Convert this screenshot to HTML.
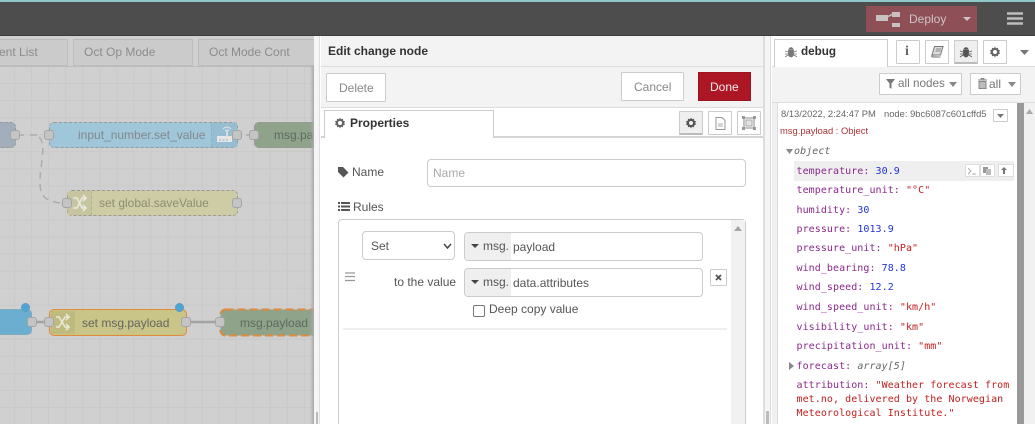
<!DOCTYPE html>
<html><head><meta charset="utf-8"><style>
html,body{margin:0;padding:0;background:#fff}
#r{position:relative;width:1035px;height:424px;overflow:hidden;font-family:"Liberation Sans",sans-serif;font-size:12px;color:#555;background:#fff}
#r div,#r span.a,#r svg{position:absolute;box-sizing:border-box}
.t{white-space:nowrap;line-height:16px}
.btn{background:#fff;border:1px solid #ccc;border-radius:1px}
.node{border-radius:5px;border:1px dashed #999}
.port{width:10px;height:10px;background:#c4c4c4;border:1px solid #a5a5a5;border-radius:3px}
.m{font-family:"DejaVu Sans Mono",monospace;font-size:10px;white-space:nowrap;line-height:14px;left:796.5px;color:#8a2a8a;letter-spacing:.06px}
.n{color:#2233dd}.s{color:#c02020}
.inp{background:#fff;border:1px solid #ccc;border-radius:4px}
.msg{background:#efefef;border-right:0;left:0;top:0;bottom:0;width:46px;border-radius:3px 0 0 3px}
</style></head><body><div id="r">
<!-- canvas -->
<div style="left:0;top:35px;width:314px;height:389px;background:#d0d0d0"></div>
<svg style="left:0;top:66px" width="314" height="358"><defs><pattern id="g" x="-3" y="0" width="17.05" height="17.05" patternUnits="userSpaceOnUse"><path d="M.5 0V17.05M0 .5H17.05" stroke="#c9c9c9" fill="none"/></pattern></defs><rect width="314" height="358" fill="url(#g)"/></svg>
<!-- canvas tabs -->
<div style="left:-60px;top:39px;width:128px;height:27px;background:#cbcbcb;border:1px solid #bcbcbc"></div>
<div class="t" style="left:-1px;top:44px;font-size:12px;color:#8c8c8c">ent List</div>
<div style="left:73px;top:39px;width:120px;height:27px;background:#cbcbcb;border:1px solid #bcbcbc"></div>
<div class="t" style="left:84px;top:44px;color:#8c8c8c">Oct Op Mode</div>
<div style="left:198px;top:39px;width:116px;height:27px;background:#cbcbcb;border:1px solid #bcbcbc;border-right:0"></div>
<div class="t" style="left:209px;top:44px;color:#8c8c8c">Oct Mode Cont</div>
<div style="left:0;top:66px;width:314px;height:1px;background:#bdbdbd"></div>
<!-- wires -->
<svg style="left:0;top:0" width="314" height="424"><path d="M20 135H24M30 135H39M39 137C44 142 43 150 42 160C38 190 38 200 60 203" stroke="#adadad" stroke-width="1.500" stroke-dasharray="7 5" fill="none"/><path d="M237 135H254" stroke="#adadad" stroke-width="1.500" stroke-dasharray="5 4" fill="none"/><path d="M32 322H49M186 322H220" stroke="#a3a3a3" stroke-width="2.500" fill="none"/></svg>
<!-- nodes -->
<div class="node" style="left:-10px;top:122px;width:26px;height:26px;background:#a3aebc"></div>
<div class="port" style="left:10px;top:130px"></div>
<div class="node" style="left:49px;top:122px;width:189px;height:26px;background:#9fc6d9"></div>
<div style="left:211px;top:123px;width:26px;height:24px;background:#96bdd1;border-left:1px dashed #8fb0c2"></div>
<svg style="left:216px;top:126px" width="18" height="18"><path d="M1 10H16V16H1Z" fill="#e6e6e6"/><path d="M11 10V5" stroke="#e6e6e6" stroke-width="1.500"/><path d="M7 3Q11 -1 15 3M9 5Q11 3 13 5" stroke="#e6e6e6" fill="none"/><path d="M3 14H5M6.500 14H8.500M10 14H12" stroke="#8fb0c2"/></svg>
<div class="t" style="left:78px;top:127px;color:#84888e;font-size:12px">input_number.set_value</div>
<div class="port" style="left:44px;top:130px"></div>
<div class="port" style="left:232px;top:130px"></div>
<div class="node" style="left:254px;top:122px;width:70px;height:26px;background:#8ea38a"></div>
<div class="port" style="left:249px;top:130px"></div>
<div class="t" style="left:274px;top:127px;color:#5f6a5e">msg.pa</div>
<div class="node" style="left:67px;top:190px;width:171px;height:26px;background:#cdcca5"></div>
<div style="left:68px;top:191px;width:24px;height:24px;background:#c6c59f;border-right:1px dashed #b3b28e"></div>
<svg style="left:71px;top:194px" width="17" height="18"><path d="M2 4H6L11 14H14M2 14H6L11 4H14M12 1L15 4L12 7M12 11L15 14L12 17" stroke="#e9e9e0" stroke-width="1.600" fill="none"/></svg>
<div class="t" style="left:99px;top:195px;color:#8e8e72">set global.saveValue</div>
<div class="port" style="left:62px;top:198px"></div>
<div class="port" style="left:232px;top:198px"></div>
<div style="left:-10px;top:309px;width:42px;height:26px;background:#6baed0;border:1px solid #7fa9be;border-radius:5px"></div>
<div class="port" style="left:27px;top:317px"></div>
<div style="left:21px;top:303px;width:9px;height:9px;border-radius:50%;background:#4ea5d5;border:1px solid #5a9dc0"></div>
<div style="left:49px;top:309px;width:138px;height:27px;background:#c9c487;border:1.500px solid #e08a3c;border-radius:5px"></div>
<div style="left:51px;top:311px;width:24px;height:23px;background:#bfbb80"></div>
<svg style="left:54px;top:312px" width="17" height="20"><path d="M2 5H5L11 15H14M2 15H5L11 5H14M12 2L15 5L12 8M12 12L15 15L12 18" stroke="#e9e9d8" stroke-width="1.600" fill="none"/></svg>
<div class="t" style="left:82px;top:315px;color:#666660;letter-spacing:0">set msg.payload</div>
<div class="port" style="left:44px;top:317px"></div>
<div class="port" style="left:181px;top:317px"></div>
<div style="left:175px;top:303px;width:9px;height:9px;border-radius:50%;background:#4ea5d5;border:1px solid #5a9dc0"></div>
<svg style="left:219px;top:308px" width="95" height="29"><rect x="1.500" y="1.500" width="120" height="26" rx="5" fill="#8ea38a" stroke="#e08a3c" stroke-width="2" stroke-dasharray="8 4"/></svg>
<div class="port" style="left:215px;top:317px"></div>
<div class="t" style="left:240px;top:315px;color:#5f6a5e">msg.payload</div>
<!-- top bar -->
<div style="left:0;top:0;width:1035px;height:36px;background:#4d4d4d;border-bottom:1px solid #3d3d3d"></div>
<div style="left:0;top:0;width:1035px;height:2px;background:#8fc8c8"></div>
<div style="left:866px;top:6px;width:111px;height:26px;background:#8e4f57"></div>
<svg style="left:875px;top:11px" width="26" height="17"><path d="M1 4H13V10H1ZM17 1H25V6H17ZM17 12H25V16H17Z" fill="#c9c0c0"/><path d="M12 6L18 3" stroke="#c9c0c0" stroke-width="1.500"/></svg>
<div class="t" style="left:909px;top:11px;color:#cfc4c6;font-size:12px">Deploy</div>
<svg style="left:962px;top:16px" width="9" height="6"><path d="M1 1H9L5 5Z" fill="#cfc4c6"/></svg>
<svg style="left:1007px;top:12px" width="16" height="14"><path d="M0 1.500H16M0 6.500H16M0 11.500H16" stroke="#bdbdbd" stroke-width="2.400"/></svg>
<!-- left gutter -->
<div style="left:310px;top:66px;width:4px;height:358px;background:linear-gradient(90deg,rgba(170,170,170,0),#a9a9a9)"></div>
<div style="left:314px;top:36px;width:6px;height:388px;background:#f5f5f5;border-right:1px solid #ddd"></div>
<div style="left:316px;top:412px;width:2px;height:12px;background:#bbb"></div>
<!-- edit tray -->
<div style="left:320px;top:36px;width:443px;height:388px;background:#fff"></div>
<div style="left:321px;top:36px;width:442px;height:31px;background:#f3f3f3;border-bottom:1px solid #ddd"></div>
<div class="t" style="left:328px;top:43px;color:#333;font-weight:bold;font-size:12px">Edit change node</div>
<div style="left:321px;top:67px;width:442px;height:41px;background:#f3f3f3;border-bottom:1px solid #ddd"></div>
<div class="btn" style="left:326px;top:73px;width:60px;height:29px"></div>
<div class="t" style="left:339px;top:80px;color:#888">Delete</div>
<div class="btn" style="left:621px;top:72px;width:63px;height:29px"></div>
<div class="t" style="left:634px;top:79px;color:#888">Cancel</div>
<div style="left:698px;top:72px;width:53px;height:29px;background:#ad1625;border:1px solid #9a1421"></div>
<div class="t" style="left:710px;top:79px;color:#eee">Done</div>
<div style="left:321px;top:136px;width:442px;height:2px;background:#d4d4d4"></div>
<div style="left:324px;top:110px;width:170px;height:28px;background:#fff;border:1px solid #ccc;border-bottom:0"></div>
<svg style="left:334px;top:117px" width="12" height="12" viewBox="0 0 24 24"><path d="M12 1l2 3.500 4-1 .5 4 4 1.500-2.500 3 2.500 3-4 1.500-.5 4-4-1-2 3.500-2-3.500-4 1-.5-4-4-1.500 2.500-3-2.500-3 4-1.500.5-4 4 1zM12 8a4 4 0 100 8 4 4 0 000-8z" fill="#666" fill-rule="evenodd"/></svg>
<div class="t" style="left:350px;top:115px;color:#333;font-weight:bold;font-size:12px">Properties</div>
<div class="btn" style="left:679px;top:111px;width:24px;height:24px;background:#efefef;border-bottom:2px solid #bbb"></div>
<svg style="left:685px;top:117px" width="12" height="12" viewBox="0 0 24 24"><path d="M12 1l2 3.500 4-1 .5 4 4 1.500-2.500 3 2.500 3-4 1.500-.5 4-4-1-2 3.500-2-3.500-4 1-.5-4-4-1.500 2.500-3-2.500-3 4-1.500.5-4 4 1zM12 8a4 4 0 100 8 4 4 0 000-8z" fill="#555" fill-rule="evenodd"/></svg>
<div class="btn" style="left:708px;top:111px;width:24px;height:24px"></div>
<svg style="left:715px;top:117px" width="11" height="13"><path d="M1 .5H7L10 3.500V12.500H1Z" fill="#fff" stroke="#999"/><path d="M3 7H8M3 9H8" stroke="#aaa"/></svg>
<div class="btn" style="left:737px;top:111px;width:24px;height:24px"></div>
<svg style="left:742px;top:116px" width="14" height="14"><path d="M2 2H12V12H2Z" fill="none" stroke="#888"/><path d="M4 4H10V10H4Z" fill="#e4e4e4" stroke="#aaa"/><path d="M0 0H3V3H0ZM11 0H14V3H11ZM0 11H3V14H0ZM11 11H14V14H11Z" fill="#999"/></svg>
<!-- form -->
<svg style="left:338px;top:167px" width="11" height="11"><path d="M0 0H5L10.500 5.500 5.500 10.500 0 5Z" fill="#555"/></svg>
<div class="t" style="left:352px;top:164px;color:#555">Name</div>
<div class="inp" style="left:427px;top:159px;width:319px;height:28px"></div>
<div class="t" style="left:433px;top:165px;color:#aaa">Name</div>
<svg style="left:338px;top:201px" width="12" height="10"><path d="M0 1H2V3H0ZM0 4.500H2V6.500H0ZM0 8H2V10H0ZM3 1H12V3H3ZM3 4.500H12V6.500H3ZM3 8H12V10H3Z" fill="#555"/></svg>
<div class="t" style="left:353px;top:199px;color:#555">Rules</div>
<div style="left:338px;top:219px;width:408px;height:220px;border:1px solid #ccc;border-radius:4px;background:#fff"></div>
<div style="left:731px;top:220px;width:14px;height:204px;background:#f1f1f1"></div>
<svg style="left:734px;top:226px" width="8" height="5"><path d="M0 5L4 0 8 5Z" fill="#a3a3a3"/></svg>
<div class="inp" style="left:362px;top:231px;width:93px;height:29px"></div>
<div class="t" style="left:371px;top:238px;color:#555">Set</div>
<svg style="left:443px;top:243px" width="9" height="6"><path d="M1 1L4.500 5 8 1" stroke="#444" stroke-width="1.500" fill="none"/></svg>
<div class="inp" style="left:464px;top:232px;width:239px;height:29px"><div class="msg"></div></div>
<svg style="left:471px;top:244px" width="8" height="5"><path d="M0 0H8L4 4Z" fill="#444"/></svg>
<div class="t" style="left:483px;top:238px;color:#555">msg.</div>
<div class="t" style="left:513px;top:239px;color:#555">payload</div>
<div class="t" style="left:394px;top:274px;color:#555">to the value</div>
<div class="inp" style="left:464px;top:268px;width:239px;height:29px"><div class="msg"></div></div>
<svg style="left:471px;top:280px" width="8" height="5"><path d="M0 0H8L4 4Z" fill="#444"/></svg>
<div class="t" style="left:483px;top:274px;color:#555">msg.</div>
<div class="t" style="left:513px;top:275px;color:#555">data.attributes</div>
<div class="btn" style="left:710px;top:269px;width:17px;height:17px"></div>
<svg style="left:715px;top:274px" width="7" height="7"><path d="M1 1L6 6M6 1L1 6" stroke="#555" stroke-width="1.800"/></svg>
<svg style="left:345px;top:272px" width="10" height="10"><path d="M0 1H10M0 4.500H10M0 8.500H10" stroke="#999" stroke-width="1.200"/></svg>
<div style="left:473px;top:305px;width:12px;height:12px;border:1px solid #777;border-radius:2px;background:#fff"></div>
<div class="t" style="left:489px;top:301px;color:#555">Deep copy value</div>
<div style="left:343px;top:328px;width:384px;height:2px;background:#eee"></div>
<!-- splitter -->
<div style="left:763px;top:36px;width:2px;height:388px;background:#ddd"></div>
<div style="left:765px;top:36px;width:6px;height:388px;background:#f5f5f5;border-right:1px solid #ddd"></div>
<div style="left:766px;top:411px;width:3px;height:13px;background:#bbb"></div>
<!-- sidebar -->
<div style="left:771px;top:36px;width:264px;height:388px;background:#fff"></div>
<div style="left:772px;top:66px;width:263px;height:37px;background:#f3f3f3;border-top:1px solid #ddd;border-bottom:1px solid #ddd"></div>
<div style="left:774px;top:39px;width:114px;height:28px;background:#fff;border:1px solid #ccc;border-bottom:0;z-index:1"></div>
<svg style="left:785px;top:46px;z-index:2" width="12" height="12" viewBox="0 0 12 12"><path d="M4 3Q6 0 8 3ZM3.500 4H8.500V9Q6 13 3.500 9ZM0 5L3 6M12 5L9 6M0 11L3 9M12 11L9 9M0 8H3M9 8H12" fill="#777" stroke="#777" stroke-width=".8"/></svg>
<div class="t" style="left:801px;top:44px;color:#333;font-weight:bold;font-size:11.700px;z-index:2">debug</div>
<div class="btn" style="left:896px;top:40px;width:24px;height:24px"></div>
<div class="t" style="left:905px;top:44px;color:#666;font-weight:bold;font-family:'Liberation Serif',serif;font-size:14px">i</div>
<div class="btn" style="left:925px;top:40px;width:24px;height:24px"></div>
<svg style="left:931px;top:46px" width="13" height="12"><path d="M3.500 .5H12L9.500 9H1L3.500 .5ZM1 9Q0 11 2 11H9.500" fill="#ddd" stroke="#777"/><path d="M5 3H10M4.500 5H9.500" stroke="#888"/></svg>
<div class="btn" style="left:954px;top:40px;width:24px;height:24px;background:#efefef;border-bottom:2px solid #bbb"></div>
<svg style="left:960px;top:46px" width="12" height="12" viewBox="0 0 12 12"><path d="M4 3Q6 0 8 3ZM3.500 4H8.500V9Q6 13 3.500 9ZM0 5L3 6M12 5L9 6M0 11L3 9M12 11L9 9M0 8H3M9 8H12" fill="#555" stroke="#555" stroke-width=".8"/></svg>
<div class="btn" style="left:983px;top:40px;width:24px;height:24px"></div>
<svg style="left:989px;top:46px" width="12" height="12" viewBox="0 0 24 24"><path d="M12 1l2 3.500 4-1 .5 4 4 1.500-2.500 3 2.500 3-4 1.500-.5 4-4-1-2 3.500-2-3.500-4 1-.5-4-4-1.500 2.500-3-2.500-3 4-1.500.5-4 4 1zM12 8a4 4 0 100 8 4 4 0 000-8z" fill="#666" fill-rule="evenodd"/></svg>
<svg style="left:1020px;top:50px" width="9" height="5"><path d="M0 0H9L4.500 5Z" fill="#777"/></svg>
<div class="btn" style="left:879px;top:73px;width:83px;height:22px"></div>
<svg style="left:886px;top:79px" width="9" height="10"><path d="M0 0H9L5.500 4.500V10L3.500 8.500V4.500Z" fill="#777"/></svg>
<div class="t" style="left:898px;top:76px;color:#777;font-size:11.700px">all nodes</div>
<svg style="left:949px;top:82px" width="8" height="5"><path d="M0 0H8L4 5Z" fill="#888"/></svg>
<div class="btn" style="left:970px;top:73px;width:51px;height:22px"></div>
<svg style="left:978px;top:78px" width="9" height="11"><path d="M0 2H9M3 2V.5H6V2M1 3.500H8V10.500H1Z" stroke="#888" fill="#bbb"/></svg>
<div class="t" style="left:989px;top:76px;color:#777">all</div>
<svg style="left:1008px;top:82px" width="8" height="5"><path d="M0 0H8L4 5Z" fill="#888"/></svg>
<!-- debug msgs -->
<div style="left:772px;top:103px;width:6px;height:321px;background:#f0f0f0;border-right:1px solid #ddd"></div>
<div style="left:1017px;top:103px;width:7px;height:321px;background:#999"></div>
<div style="left:1024px;top:103px;width:11px;height:321px;background:#f1f1f1"></div>
<svg style="left:1026px;top:109px" width="7" height="5"><path d="M0 5L3.500 0 7 5Z" fill="#aaa"/></svg>
<div class="t" style="left:781px;top:106px;font-size:9.400px;color:#666">8/13/2022, 2:24:47 PM</div>
<div class="t" style="left:884px;top:106px;font-size:9.400px;color:#666">node: 9bc6087c601cffd5</div>
<div class="btn" style="left:993px;top:109px;width:15px;height:13px"></div>
<svg style="left:997px;top:114px" width="7" height="4"><path d="M0 0H7L3.500 4Z" fill="#777"/></svg>
<div class="t" style="left:780px;top:123px;font-size:9.400px;color:#a33">msg.payload : Object</div>
<svg style="left:786px;top:149px" width="7" height="5"><path d="M0 0H7L3.500 5Z" fill="#888"/></svg>
<div class="m" style="left:794px;top:145px;color:#666;font-style:italic">object</div>
<div style="left:794px;top:161px;width:220px;height:20px;background:#efefef"></div>
<div class="btn" style="left:965px;top:164px;width:15px;height:13px;border-color:#ddd"></div>
<div class="btn" style="left:980px;top:164px;width:15px;height:13px;border-color:#ddd"></div>
<div class="btn" style="left:998px;top:164px;width:16px;height:13px;border-color:#ddd"></div>
<svg style="left:968px;top:167px" width="44" height="8"><path d="M0 1L3 4 0 7M4 7H8" stroke="#aaa" fill="none"/><path d="M15 0H20V6H15Z" fill="#999"/><path d="M18 2H23V8H18Z" fill="#bbb"/><path d="M36 0L39 3H37V7H35V3H33Z" fill="#777"/></svg>
<div class="m" style="top:165px">temperature: <span class="n">30.9</span></div>
<div class="m" style="top:184px">temperature_unit: <span class="s">"°C"</span></div>
<div class="m" style="top:204px">humidity: <span class="n">30</span></div>
<div class="m" style="top:223px">pressure: <span class="n">1013.9</span></div>
<div class="m" style="top:242px">pressure_unit: <span class="s">"hPa"</span></div>
<div class="m" style="top:262px">wind_bearing: <span class="n">78.8</span></div>
<div class="m" style="top:281px">wind_speed: <span class="n">12.2</span></div>
<div class="m" style="top:301px">wind_speed_unit: <span class="s">"km/h"</span></div>
<div class="m" style="top:321px">visibility_unit: <span class="s">"km"</span></div>
<div class="m" style="top:340px">precipitation_unit: <span class="s">"mm"</span></div>
<svg style="left:789px;top:362px" width="5" height="8"><path d="M0 0L5 4 0 8Z" fill="#888"/></svg>
<div class="m" style="top:360px">forecast: <span style="color:#666;font-style:italic">array[5]</span></div>
<div class="m" style="top:379px">attribution: <span class="s">"Weather forecast from</span></div>
<div class="m s" style="top:393px">met.no, delivered by the Norwegian</div>
<div class="m s" style="top:407px">Meteorological Institute."</div>
</div></body></html>
